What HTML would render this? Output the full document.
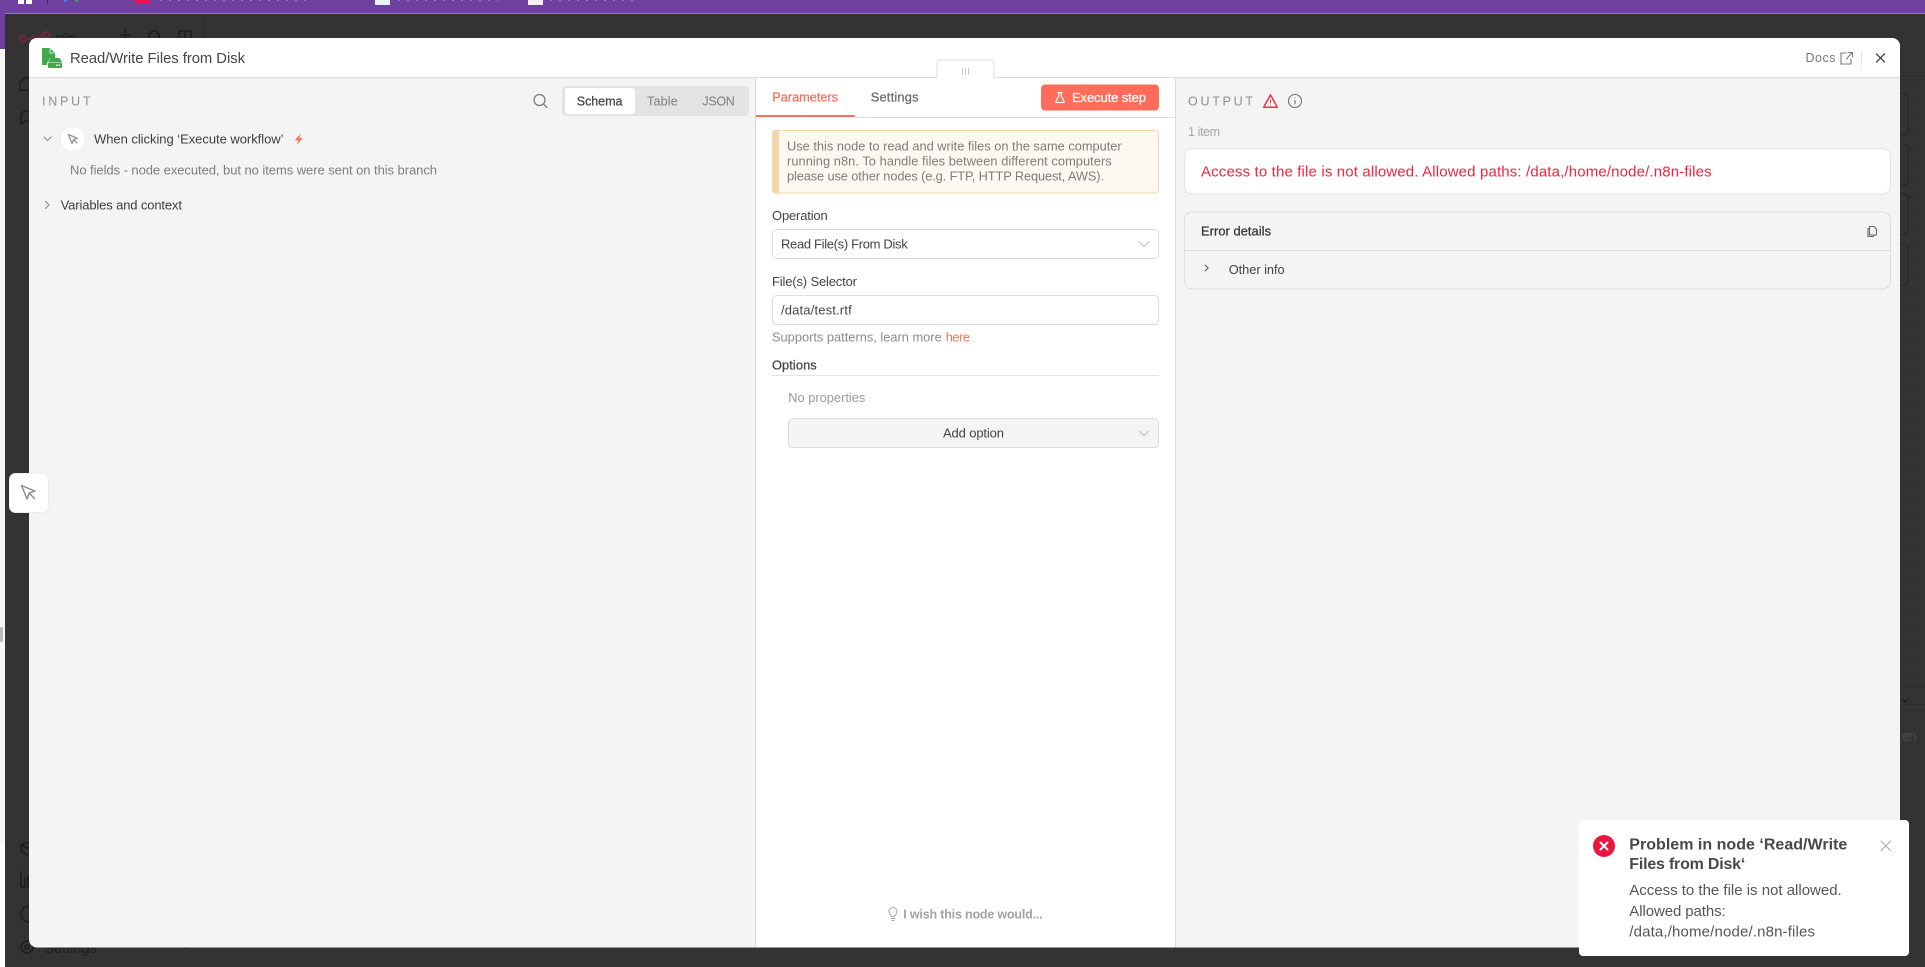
<!DOCTYPE html>
<html lang="en">
<head>
<meta charset="utf-8">
<title>Read/Write Files from Disk</title>
<style>
html,body{margin:0;padding:0;width:1925px;height:967px;overflow:hidden;background:#333}
svg{display:block;font-family:"Liberation Sans",sans-serif}
.m{stroke-width:.25px;paint-order:stroke}
.i{fill:none;stroke-linecap:round;stroke-linejoin:round}
</style>
</head>
<body>
<svg xmlns="http://www.w3.org/2000/svg" width="1925" height="967" viewBox="0 0 1925 967">
<!-- backdrop -->
<rect width="1925" height="967" fill="#333"/>
<rect width="1925" height="13" fill="#7040a0"/>
<rect y="13" width="1925" height="1" fill="#9a72c6"/>
<rect width="5" height="49" fill="#7040a0"/>
<rect y="49" width="5" height="796" fill="#f7f7f7"/>
<rect y="845" width="5" height="122" fill="#fff"/>
<rect x="0" y="627" width="3" height="15" rx="1" fill="#bbb"/>
<rect x="204" y="14" width="1" height="24" fill="#2b2b2b"/>
<!-- bookmarks bar fragments -->
<rect x="18" y="0" width="6" height="4" fill="#fff"/><rect x="26" y="0" width="6" height="4" fill="#fff"/>
<rect x="47" y="0" width="1" height="4" fill="#3d2a55"/>
<rect x="64" y="0" width="3" height="2" fill="#3b82f6"/><rect x="75" y="0" width="3" height="2" fill="#34a853"/>
<rect x="135" y="0" width="15" height="3" fill="#e8174b"/>
<rect x="375" y="0" width="15" height="5" fill="#e8f2fb"/>
<rect x="528" y="0" width="15" height="5" fill="#f4f0fa"/>
<g stroke="#9478b8" stroke-width="1" stroke-dasharray="2 7"><path d="M160 .5H310M398 .5H498M550 .5H640"/></g>
<!-- sidebar behind -->
<g class="i" stroke="#6a2b3a" stroke-width="2"><circle cx="23" cy="39" r="3"/><circle cx="34" cy="39" r="3"/><circle cx="46" cy="35" r="3"/><path d="M26 39h5M37 39c3 0 3-4 6-4"/></g>
<text x="55" y="43" font-size="15" fill="#222" textLength="22">n8n</text>
<g class="i" stroke="#1d1d1d" stroke-width="1.6">
<path d="M125 29v10M120 35h10"/><circle cx="154" cy="36" r="5"/><rect x="179" y="31" width="12" height="10"/><path d="M185 31v8"/>
<path d="M20 90v-8l6-5 5 4M20 90h9"/>
<path d="M21 124v-8a5 5 0 0 1 5-5h3M21 124l4-3h4"/>
<path d="M21 845l6-3 4 2M21 845v6l6 4h4M21 845l6 3 4-1"/>
<path d="M21 872v15h9M25 878v7M28 876v9"/>
<circle cx="29" cy="914" r="8"/>
<circle cx="27" cy="947" r="6"/><circle cx="27" cy="947" r="2"/>
</g>
<text x="44" y="953" font-size="15" fill="#1f1f1f" textLength="53" lengthAdjust="spacing">Settings</text>
<path class="i" stroke="#1d1d1d" stroke-width="1.3" d="M183 945l3 3 3-3"/>
<!-- right edge cards -->
<g fill="none" stroke="#252525"><rect x="1880" y="93" width="28" height="42" rx="4"/><rect x="1880" y="144" width="28" height="41" rx="4"/><rect x="1880" y="194" width="28" height="41" rx="4"/><rect x="1880" y="244" width="28" height="41" rx="4"/></g>
<path stroke="#262626" stroke-width="2" stroke-dasharray="1 15" d="M1912 84V680"/>
<rect x="1900" y="76" width="25" height="1" fill="#2a2a2a"/>
<rect x="1900" y="686" width="25" height="1" fill="#2c2c2c"/>
<rect x="1900" y="704" width="25" height="1" fill="#2c2c2c"/>
<path class="i" stroke="#1f1f1f" stroke-width="1.3" d="M1902 699l3 3 3-3"/>
<text x="1902" y="741" font-size="15" fill="#474747" textLength="15">em</text>
<!-- modal -->
<rect x="29" y="38" width="1871" height="909.500" rx="8" fill="#f4f4f4"/>
<path d="M29 77V46a8 8 0 0 1 8-8H1892a8 8 0 0 1 8 8V77Z" fill="#fff"/>
<rect x="29" y="77" width="1871" height="1" fill="#dcdcdc"/>
<rect x="756" y="78" width="419" height="869.500" fill="#fff"/>
<rect x="755" y="78" width="1" height="869.500" fill="#dcdcdc"/>
<rect x="1175" y="78" width="1" height="869.500" fill="#dcdcdc"/>
<!-- drag handle -->
<path d="M937 78V63a3 3 0 0 1 3-3H991a3 3 0 0 1 3 3V78" fill="#fff" stroke="#ddd"/>
<path d="M962.500 68v7M965.500 68v7M968.500 68v7" stroke="#c4c4c4" stroke-width="1"/>
<!-- header -->
<g>
<path d="M42 48H50L55 53V58H50L47 63V65H42Z" fill="#3fa94b"/>
<path d="M50 48.500V53H54.500" fill="none" stroke="#fff" stroke-width=".8"/>
<path d="M50.500 58H59.500L62 62H48Z" fill="#3fa94b"/>
<rect x="48" y="62.500" width="14" height="5.500" rx="1" fill="#3fa94b"/>
<rect x="56" y="64.500" width="1.500" height="1.500" fill="#fff"/><rect x="58.500" y="64.500" width="1.500" height="1.500" fill="#fff"/>
</g>
<text x="70" y="63" font-size="14.800" fill="#444" textLength="175">Read/Write Files from Disk</text>
<text x="1805.500" y="62" font-size="12.500" fill="#7a7a7a" textLength="30">Docs</text>
<g class="i" stroke="#7a7a7a" stroke-width="1.100"><path d="M1846 53h-5v11h10v-5"/><path d="M1846.500 59l5.500-6.500M1848 52.500h4.500v4.500"/></g>
<rect x="1861" y="50" width="1" height="16" fill="#e2e2e2"/>
<path class="i" stroke="#444" stroke-width="1.300" d="M1876.500 54l8 8M1884.500 54l-8 8"/>
<!-- input panel -->
<text x="42" y="105.500" font-size="12.500" fill="#8f8f8f" textLength="48.600">INPUT</text>
<g class="i" stroke="#7c7c7c" stroke-width="1.300"><circle cx="539.500" cy="100" r="5.500"/><path d="M543.500 104l3.500 3.500"/></g>
<rect x="562" y="86" width="187" height="30" rx="4" fill="#e3e3e3"/>
<rect x="565" y="88" width="70" height="26" rx="3" fill="#fff"/>
<text x="576.800" y="105.500" font-size="12.500" fill="#444" class="m" stroke="#444" textLength="45.600">Schema</text>
<text x="647" y="105.500" font-size="12.500" fill="#7d7d7d" textLength="30.700">Table</text>
<text x="702.400" y="105.500" font-size="12.500" fill="#7d7d7d" textLength="32.400">JSON</text>
<path class="i" stroke="#8a8a8a" stroke-width="1.100" d="M44 137l3.500 3.500 3.500-3.500"/>
<rect x="60.500" y="127" width="24.500" height="24" rx="10" fill="#fff" stroke="#eee" stroke-width=".8"/>
<g class="i" stroke="#8b8b93" stroke-width="1.200"><path d="M68.500 134.500l3.600 9 1.300-3.900 3.900-1.300z"/><path d="M73.800 139.800l3.200 3.200"/></g>
<text x="94" y="143.500" font-size="13" fill="#3d3d3d" textLength="189.500">When clicking ‘Execute workflow’</text>
<path d="M300.800 133.500l-6 6.800h3.400l-1.500 4.700 6-7h-3.400z" fill="#ff6d5a"/>
<text x="70" y="174.500" font-size="13" fill="#7d7d7d" textLength="367">No fields - node executed, but no items were sent on this branch</text>
<path class="i" stroke="#8a8a8a" stroke-width="1.100" d="M45.500 201.500l3.500 3.500-3.500 3.500"/>
<text x="60.600" y="209.500" font-size="13" fill="#3d3d3d" textLength="121.400">Variables and context</text>
<!-- params -->
<text x="772.300" y="101.500" font-size="12.800" fill="#ff6d5a" class="m" stroke="#ff6d5a" textLength="65.700">Parameters</text>
<rect x="756" y="115" width="98.700" height="2" fill="#ff6d5a"/>
<rect x="854.700" y="117" width="320.300" height="1" fill="#dcdcdc"/>
<text x="870.700" y="101.500" font-size="12.800" fill="#6a6a6a" class="m" stroke="#6a6a6a" textLength="47.800">Settings</text>
<rect x="1041" y="84.500" width="118" height="26" rx="4" fill="#ff6d5a"/>
<g class="i" stroke="#fff" stroke-width="1.200"><path d="M1058 92.500h4M1058.800 92.500v3.500l-3 5.500a.7.7 0 0 0 .6 1h7.200a.7.7 0 0 0 .6-1l-3-5.500v-3.500"/></g>
<text x="1072" y="102" font-size="13" fill="#fff" class="m" stroke="#fff" textLength="74">Execute step</text>
<!-- callout -->
<rect x="772.500" y="130.500" width="386" height="62.500" rx="3" fill="#fef9f0" stroke="#f3d9a8"/>
<path d="M775 130H779V193.500H775A3 3 0 0 1 772 190.500V133A3 3 0 0 1 775 130Z" fill="#f3d7a8"/>
<g font-size="12.800" fill="#7d7d7d">
<text x="787" y="150.500" textLength="334.700">Use this node to read and write files on the same computer</text>
<text x="787" y="165.500" textLength="324.700">running n8n. To handle files between different computers</text>
<text x="787" y="180.500" textLength="317">please use other nodes (e.g. FTP, HTTP Request, AWS).</text>
</g>
<text x="772" y="220.200" font-size="13" fill="#444" textLength="55.700">Operation</text>
<rect x="772.500" y="229.500" width="386" height="29" rx="4" fill="#fff" stroke="#dcdcdc"/>
<text x="781" y="248.500" font-size="13" fill="#444" textLength="126.700">Read File(s) From Disk</text>
<path class="i" stroke="#bdbdbd" stroke-width="1.100" d="M1139 242l5 4.500 5-4.500"/>
<text x="772" y="286.200" font-size="13" fill="#444" textLength="85">File(s) Selector</text>
<rect x="772.500" y="295.500" width="386" height="29" rx="4" fill="#fff" stroke="#dcdcdc"/>
<text x="781" y="314.500" font-size="13" fill="#444" textLength="70.700">/data/test.rtf</text>
<text x="772" y="341.500" font-size="12.800" fill="#8a8a8a" textLength="169.700">Supports patterns, learn more</text>
<text x="945.700" y="341.500" font-size="12.800" fill="#ff6d5a" textLength="24.300">here</text>
<text x="772" y="369.500" font-size="12.800" fill="#444" class="m" stroke="#444" textLength="44.700">Options</text>
<rect x="772" y="375" width="387" height="1" fill="#e4e4e4"/>
<text x="788.300" y="402" font-size="12.800" fill="#9a9a9a" textLength="77">No properties</text>
<rect x="788.500" y="418.500" width="370" height="29" rx="4" fill="#f4f4f4" stroke="#dcdcdc"/>
<text x="943" y="437.500" font-size="13" fill="#444" textLength="61">Add option</text>
<path class="i" stroke="#bdbdbd" stroke-width="1.100" d="M1139 431l5 4.500 5-4.500"/>
<g class="i" stroke="#a8a8a8" stroke-width="1"><path d="M891.500 916.500c0-1.500-2.500-2-2.500-5a4 4 0 0 1 8 0c0 3-2.500 3.500-2.500 5zM891 918.500h4M891.800 920.500h2.400"/></g>
<text x="903.300" y="918.500" font-size="12.500" fill="#a3a3a3" font-weight="700" textLength="139.400">I wish this node would...</text>
<!-- output -->
<text x="1188" y="105.500" font-size="12.500" fill="#8f8f8f" textLength="65">OUTPUT</text>
<path class="i" stroke="#f0304a" stroke-width="1.500" d="M1270.500 94.800l6.800 12.400h-13.600z"/>
<path class="i" stroke="#f0304a" stroke-width="1" d="M1270.500 100v3M1270.500 105v.1"/>
<g class="i" stroke="#6f6f6f" stroke-width="1.100"><circle cx="1295" cy="101" r="6.500"/><path d="M1295 100.500v3.500M1295 98v.1"/></g>
<text x="1188" y="136" font-size="12.500" fill="#a8a8a8" textLength="32">1 item</text>
<rect x="1184.500" y="148.500" width="706" height="45.500" rx="8" fill="#fff" stroke="#e4e4e4"/>
<text x="1201" y="176.700" font-size="15" fill="#f02440" textLength="510.600">Access to the file is not allowed. Allowed paths: /data,/home/node/.n8n-files</text>
<rect x="1184.500" y="212" width="706" height="77" rx="8" fill="none" stroke="#dcdcdc"/>
<rect x="1185" y="250" width="705" height="1" fill="#dcdcdc"/>
<text x="1201" y="235.500" font-size="12.800" fill="#333" class="m" stroke="#333" textLength="70">Error details</text>
<g class="i" stroke="#6a6a6a" stroke-width="1.100"><path d="M1869.500 226.500h4.500l2.500 2.500v6h-7z"/><path d="M1869.500 228.500h-1.500v8h5.500V235"/></g>
<path class="i" stroke="#555" stroke-width="1" d="M1205 265l3.200 3-3.200 3"/>
<text x="1228.700" y="274" font-size="12.800" fill="#444" textLength="55.900">Other info</text>
<!-- toast -->
<rect x="1579" y="820" width="330" height="136" rx="4" fill="#fff"/>
<circle cx="1604" cy="846" r="11" fill="#e9173d"/>
<path class="i" stroke="#fff" stroke-width="2" d="M1600.500 842.500l7 7M1607.500 842.500l-7 7"/>
<text x="1629.300" y="849.500" font-size="16" font-weight="700" fill="#484848" textLength="218">Problem in node ‘Read/Write</text>
<text x="1629.300" y="869" font-size="16" font-weight="700" fill="#484848" textLength="116">Files from Disk‘</text>
<text x="1629.300" y="895" font-size="15" fill="#555" textLength="212.400">Access to the file is not allowed.</text>
<text x="1629.300" y="916" font-size="15" fill="#555" textLength="96.400">Allowed paths:</text>
<text x="1629.300" y="936.500" font-size="15" fill="#555" textLength="185.700">/data,/home/node/.n8n-files</text>
<path class="i" stroke="#a5a5a5" stroke-width="1" d="M1881 841l9.500 9.500M1890.500 841l-9.500 9.500"/>
<!-- side trigger -->
<rect x="9.500" y="473.500" width="39" height="39" rx="6" fill="#fff" stroke="#ececec"/>
<g class="i" stroke="#8b8b93" stroke-width="1.400"><path d="M21.500 485.500l5.600 13.500 2-5.900 5.900-2z"/><path d="M29.500 493.500l5 5"/></g>
</svg>
</body>
</html>
